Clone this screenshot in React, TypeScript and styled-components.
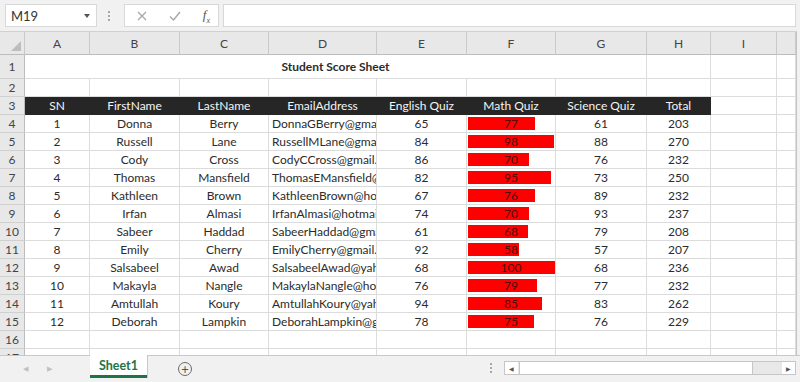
import styled, { createGlobalStyle } from 'styled-components';

const COLS = '25px 65px 90px 89px 108px 90px 89px 91px 64px 66px 1fr';
const LETTERS = ['A', 'B', 'C', 'D', 'E', 'F', 'G', 'H', 'I', 'J'];
const HEADS = ['SN', 'FirstName', 'LastName', 'EmailAddress', 'English Quiz', 'Math Quiz', 'Science Quiz', 'Total'];

const students: [number, string, string, string, number, number, number, number][] = [
  [1, 'Donna', 'Berry', 'DonnaGBerry@gmail.com', 65, 77, 61, 203],
  [2, 'Russell', 'Lane', 'RussellMLane@gmail.com', 84, 98, 88, 270],
  [3, 'Cody', 'Cross', 'CodyCCross@gmail.com', 86, 70, 76, 232],
  [4, 'Thomas', 'Mansfield', 'ThomasEMansfield@gmail.com', 82, 95, 73, 250],
  [5, 'Kathleen', 'Brown', 'KathleenBrown@hotmail.com', 67, 76, 89, 232],
  [6, 'Irfan', 'Almasi', 'IrfanAlmasi@hotmail.com', 74, 70, 93, 237],
  [7, 'Sabeer', 'Haddad', 'SabeerHaddad@gmail.com', 61, 68, 79, 208],
  [8, 'Emily', 'Cherry', 'EmilyCherry@gmail.com', 92, 58, 57, 207],
  [9, 'Salsabeel', 'Awad', 'SalsabeelAwad@yahoo.com', 68, 100, 68, 236],
  [10, 'Makayla', 'Nangle', 'MakaylaNangle@hotmail.com', 76, 79, 77, 232],
  [11, 'Amtullah', 'Koury', 'AmtullahKoury@yahoo.com', 94, 85, 83, 262],
  [12, 'Deborah', 'Lampkin', 'DeborahLampkin@gmail.com', 78, 75, 76, 229],
];

const GlobalStyle = createGlobalStyle`
  html, body {
    margin: 0;
    padding: 0;
    background: #f1f1f1;
  }
  * {
    box-sizing: border-box;
  }
`;

const Window = styled.div`
  width: 800px;
  height: 382px;
  display: flex;
  flex-direction: column;
  background: #f1f1f1;
  font-family: Lato, 'Liberation Sans', sans-serif;
  overflow: hidden;
`;

const FormulaBar = styled.div`
  height: 31px;
  display: flex;
  align-items: center;
  padding: 0 4px 0 5px;
`;

const NameBox = styled.div`
  width: 92px;
  height: 23px;
  background: #fff;
  border: 1px solid #d8d8d8;
  display: flex;
  align-items: center;
  justify-content: space-between;
  padding: 0 6px 0 5px;
  font-size: 13px;
  color: #333;
`;

const Caret = styled.span`
  width: 0;
  height: 0;
  border-left: 3.5px solid transparent;
  border-right: 3.5px solid transparent;
  border-top: 4px solid #555;
`;

const Grip = styled.div<{ $left: number; $right: number }>`
  width: 2px;
  height: 12px;
  margin: 0 ${({ $right }) => $right}px 0 ${({ $left }) => $left}px;
  background: radial-gradient(circle, #a8a8a8 0.8px, transparent 1px) 0 0 / 2px 4px;
`;

const FxBox = styled.div`
  width: 95px;
  height: 23px;
  background: #fff;
  border: 1px solid #d8d8d8;
  display: flex;
  align-items: center;
  justify-content: space-between;
  padding: 0 8px 0 12px;
  margin-right: 4px;
`;

const Fx = styled.span`
  font-family: 'Liberation Serif', serif;
  font-style: italic;
  font-size: 13px;
  color: #555;
  sub {
    font-size: 8px;
  }
`;

const FormulaInput = styled.div`
  flex: 1;
  height: 23px;
  background: #fff;
  border: 1px solid #d8d8d8;
`;

const Sheet = styled.div`
  flex: 1;
  overflow: hidden;
  margin-right: 3px;
  border-top: 1px solid #d0d0d0;
  border-right: 1px solid #c4c4c4;
  background: #fff;
`;

const Row = styled.div<{ $h: number }>`
  display: grid;
  grid-template-columns: ${COLS};
  height: ${({ $h }) => $h}px;
`;

const ColHead = styled.div`
  background: #e8e8e8;
  border-right: 1px solid #c9c9c9;
  border-bottom: 1px solid #bdbdbd;
  display: flex;
  align-items: center;
  justify-content: center;
  font-size: 12px;
  color: #444;
  position: relative;
`;

const Corner = styled(ColHead)`
  &::after {
    content: '';
    position: absolute;
    right: 3px;
    bottom: 3px;
    border-left: 10px solid transparent;
    border-bottom: 10px solid #bdbdbd;
  }
`;

const RowHead = styled.div`
  background: #e8e8e8;
  border-right: 1px solid #bdbdbd;
  border-bottom: 1px solid #d0d0d0;
  display: flex;
  align-items: center;
  justify-content: center;
  font-size: 12px;
  color: #444;
`;

const Cell = styled.div<{ $align?: string; $dark?: boolean; $bold?: boolean; $span?: number }>`
  grid-column: span ${({ $span }) => $span || 1};
  border-right: 1px solid ${({ $dark }) => ($dark ? '#262626' : '#dcdcdc')};
  border-bottom: 1px solid ${({ $dark }) => ($dark ? '#262626' : '#dcdcdc')};
  background: ${({ $dark }) => ($dark ? '#262626' : '#fff')};
  color: ${({ $dark }) => ($dark ? '#f4f4f4' : '#2b2b2b')};
  font-size: 12px;
  font-weight: ${({ $bold }) => ($bold ? 700 : 400)};
  display: flex;
  align-items: center;
  justify-content: ${({ $align }) => ($align === 'left' ? 'flex-start' : 'center')};
  padding: 0 3px;
  white-space: nowrap;
  overflow: hidden;
  text-overflow: clip;
  position: relative;
`;

const Bar = styled.div`
  position: absolute;
  left: 1px;
  top: 2px;
  bottom: 2px;
  background: #ff0000;
`;

const BarValue = styled.span`
  position: relative;
  color: #4a0c0c;
`;

const TabBar = styled.div`
  height: 27px;
  display: flex;
  align-items: flex-start;
  border-top: 1px solid #c8c8c8;
  background: #f1f1f1;
`;

const NavArrows = styled.div`
  width: 90px;
  height: 24px;
  display: flex;
  align-items: center;
  gap: 19px;
  padding-left: 23px;
  color: #c0c0c0;
  font-size: 7px;
`;

const Tab = styled.div`
  width: 57px;
  height: 23px;
  margin-top: -1px;
  background: #fff;
  border-bottom: 3px solid #217346;
  color: #217346;
  font-weight: 700;
  font-size: 12.5px;
  display: flex;
  align-items: center;
  justify-content: center;
  box-shadow: 1px 0 0 #c8c8c8;
`;

const AddButton = styled.div`
  width: 14px;
  height: 14px;
  margin: 6px 0 0 31px;
  border: 1px solid #6a6a6a;
  border-radius: 50%;
  display: flex;
  align-items: center;
  justify-content: center;
  color: #555;
  font-size: 13px;
  line-height: 1;
`;

const ScrollArea = styled.div`
  flex: 1;
  display: flex;
  align-items: center;
  height: 24px;
  padding-left: 298px;
`;

const Scrollbar = styled.div`
  flex: 1;
  height: 14px;
  margin: 0 4px 0 12px;
  display: flex;
  border: 1px solid #c6c6c6;
  background: #e8e8e8;
`;

const ScrollBtn = styled.div`
  width: 13px;
  display: flex;
  align-items: center;
  justify-content: center;
  background: #fff;
  color: #555;
  font-size: 6px;
`;

const Thumb = styled.div`
  width: 234px;
  margin-left: 1px;
  background: #fff;
  border-left: 1px solid #c6c6c6;
  border-right: 1px solid #c6c6c6;
`;

const Track = styled.div`
  flex: 1;
`;

const App = () => {
  const blankRow = (n: number) => (
    <Row $h={18} key={n}>
      <RowHead>{n}</RowHead>
      {LETTERS.map((l) => (
        <Cell key={l} />
      ))}
    </Row>
  );

  return (
    <Window>
      <GlobalStyle />
      <FormulaBar>
        <NameBox>
          M19
          <Caret />
        </NameBox>
        <Grip $left={11} $right={14} />
        <FxBox>
          <svg width="10" height="10" viewBox="0 0 10 10">
            <path d="M1 1L9 9M9 1L1 9" stroke="#a6a6a6" strokeWidth="1.2" />
          </svg>
          <svg width="12" height="10" viewBox="0 0 12 10">
            <path d="M1 5.5L4.5 9L11 1" stroke="#a6a6a6" strokeWidth="1.4" fill="none" />
          </svg>
          <Fx>
            f<sub>x</sub>
          </Fx>
        </FxBox>
        <FormulaInput />
      </FormulaBar>

      <Sheet>
        <Row $h={23}>
          <Corner />
          {LETTERS.map((l) => (
            <ColHead key={l}>{l === 'J' ? '' : l}</ColHead>
          ))}
        </Row>

        <Row $h={24}>
          <RowHead>1</RowHead>
          <Cell $span={7} $bold>
            Student Score Sheet
          </Cell>
          <Cell />
          <Cell />
          <Cell />
        </Row>

        {blankRow(2)}

        <Row $h={18}>
          <RowHead>3</RowHead>
          {HEADS.map((h) => (
            <Cell key={h} $dark>
              {h}
            </Cell>
          ))}
          <Cell />
          <Cell />
        </Row>

        {students.map((s, i) => (
          <Row $h={18} key={s[0]}>
            <RowHead>{i + 4}</RowHead>
            <Cell>{s[0]}</Cell>
            <Cell>{s[1]}</Cell>
            <Cell>{s[2]}</Cell>
            <Cell $align="left">{s[3]}</Cell>
            <Cell>{s[4]}</Cell>
            <Cell>
              <Bar style={{ width: `${s[5] * 0.875}px` }} />
              <BarValue>{s[5]}</BarValue>
            </Cell>
            <Cell>{s[6]}</Cell>
            <Cell>{s[7]}</Cell>
            <Cell />
            <Cell />
          </Row>
        ))}

        {blankRow(16)}
        {blankRow(17)}
      </Sheet>

      <TabBar>
        <NavArrows>
          <span>◀</span>
          <span>▶</span>
        </NavArrows>
        <Tab>Sheet1</Tab>
        <AddButton>+</AddButton>
        <ScrollArea>
          <Grip $left={0} $right={0} />
          <Scrollbar>
            <ScrollBtn>◀</ScrollBtn>
            <Thumb />
            <Track />
            <ScrollBtn>▶</ScrollBtn>
          </Scrollbar>
        </ScrollArea>
      </TabBar>
    </Window>
  );
};

export default App;
